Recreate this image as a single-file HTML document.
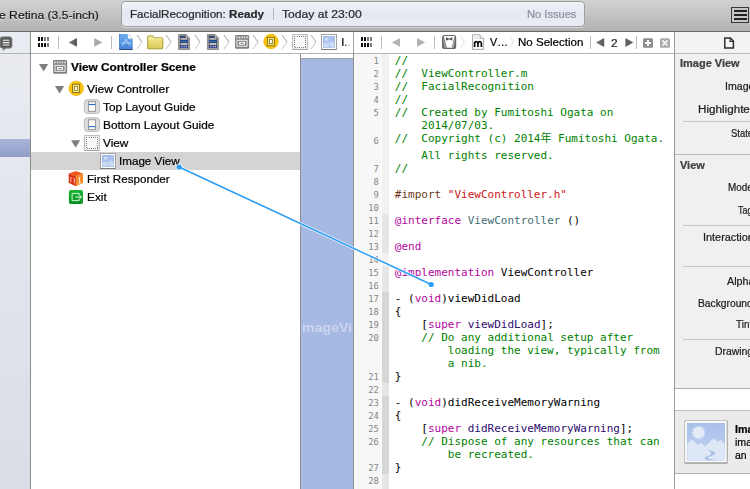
<!DOCTYPE html>
<html><head><meta charset="utf-8"><title>Xcode</title>
<style>
html,body{margin:0;padding:0}
body{width:750px;height:489px;overflow:hidden;position:relative;background:#fff;font-family:"Liberation Sans","Noto Sans CJK JP",sans-serif;font-size:11px;color:#000}
.a{position:absolute}
.t{position:absolute;white-space:pre;line-height:14px;transform-origin:0 50%;-webkit-text-stroke:0.22px currentColor}
#toolbar{left:0;top:0;width:750px;height:31px;background:linear-gradient(#d2d2d2,#c3c3c3 50%,#b1b1b1);border-bottom:1px solid #6a6a6a}
#status{left:121px;top:1px;width:462px;height:24px;border:1px solid #a0a0a0;border-radius:4px;background:linear-gradient(#eff2f8,#e4e8f1 50%,#eaedf5);box-shadow:0 1px 0 rgba(255,255,255,.45)}
#jump{left:0;top:32px;width:750px;height:21px;background:#fff;border-bottom:1px solid #b5b5b5}
.code{position:absolute;left:394.8px;white-space:pre;font-family:"DejaVu Sans Mono","Liberation Mono","Noto Sans CJK JP",monospace;font-size:11px;line-height:13px;color:#000;height:13px}
.ln{position:absolute;left:354px;width:24.5px;text-align:right;font-family:"DejaVu Sans Mono","Liberation Mono",monospace;font-size:8.8px;line-height:13px;color:#858585;height:13px;letter-spacing:-0.2px}
.c{color:#007f00}.k{color:#b4069d}.s{color:#cd1519}.p{color:#6c3a18}.cl{color:#3f6e74}.m{color:#2e0d6e}
.isep{position:absolute;left:683px;width:67px;height:1px;background:#c6c6c6}
</style></head><body>

<!-- ===== toolbar ===== -->
<div id="toolbar" class="a"></div>
<div id="status" class="a"></div>
<div class="a" style="left:273px;top:8px;width:1px;height:12px;background:#b4b7bf"></div>
<div class="a" style="left:731px;top:7px;width:16px;height:14px;border:1px solid #3a3a3a;background:#c6c6c6"></div>
<div class="a" style="left:734px;top:10px;width:12.5px;height:2px;background:#222"></div>
<div class="a" style="left:734px;top:14px;width:12.5px;height:2px;background:#222"></div>
<div class="a" style="left:734px;top:18px;width:12.5px;height:2px;background:#222"></div>

<!-- ===== jump bar ===== -->
<div id="jump" class="a"></div>
<div class="a" style="left:0;top:32px;width:30px;height:21px;background:#e9ecf2"></div>
<div class="t" style="left:341.3px;top:35.3px;width:11px;overflow:hidden;color:#000;-webkit-mask-image:linear-gradient(90deg,#000 30%,transparent 90%);mask-image:linear-gradient(90deg,#000 30%,transparent 90%)">I...</div>

<!-- ===== left sidebar ===== -->
<div class="a" style="left:0;top:54px;width:30px;height:435px;background:linear-gradient(#e9ebf1,#d9dde6)"></div>
<div class="a" style="left:0;top:139px;width:30px;height:18px;background:linear-gradient(#aab6d9,#8e9dc7)"></div>
<div class="a" style="left:30px;top:32px;width:1px;height:457px;background:#8e8e8e"></div>

<!-- ===== outline ===== -->
<div class="a" style="left:31px;top:152px;width:269px;height:18px;background:#d4d4d4"></div>

<!-- ===== canvas ===== -->
<div class="a" style="left:300px;top:54px;width:1px;height:435px;background:#8f8f8f"></div>
<div class="a" style="left:301px;top:58px;width:52px;height:1px;background:#a3a3a3"></div>
<div class="a" style="left:301px;top:59px;width:52px;height:430px;background:#a6b9e2;overflow:hidden">
  <div class="t" style="left:-16.8px;top:260.6px;font-size:13px;font-weight:bold;color:#cbd5f0;line-height:16px;transform:scaleX(1.088);-webkit-text-stroke:0">UIImageView</div>
</div>
<div class="a" style="left:353px;top:32px;width:1px;height:21px;background:#a4a4a4"></div>
<div class="a" style="left:353px;top:53px;width:1px;height:436px;background:#8f8f8f"></div>

<!-- ===== code gutter ===== -->
<div class="a" style="left:354px;top:54px;width:28px;height:435px;background:#f7f7f7"></div>
<div class="a" style="left:381px;top:54px;width:1px;height:435px;background:#fbfbfb"></div>
<div class="a" style="left:382px;top:54px;width:7px;height:435px;background:#f1f1f1"></div>
<div class="a" style="left:382px;top:214px;width:7px;height:39px;background:#e6e6e6"></div>
<div class="a" style="left:382px;top:266px;width:7px;height:223px;background:#e6e6e6"></div>
<div class="a" style="left:382px;top:292px;width:7px;height:91px;background:#d6d6d6"></div>
<div class="a" style="left:382px;top:396px;width:7px;height:78px;background:#d6d6d6"></div>
<div class="ln" style="top:55px">1</div>
<div class="code" style="top:54px"><span class="c">//</span></div>
<div class="ln" style="top:68px">2</div>
<div class="code" style="top:67px"><span class="c">//  ViewController.m</span></div>
<div class="ln" style="top:81px">3</div>
<div class="code" style="top:80px"><span class="c">//  FacialRecognition</span></div>
<div class="ln" style="top:94px">4</div>
<div class="code" style="top:93px"><span class="c">//</span></div>
<div class="ln" style="top:107px">5</div>
<div class="code" style="top:106px"><span class="c">//  Created by Fumitoshi Ogata on</span></div>
<div class="code" style="top:119px"><span class="c">    2014/07/03.</span></div>
<div class="ln" style="top:135px">6</div>
<div class="code" style="top:132px"><span class="c">//  Copyright (c) 2014年 Fumitoshi Ogata.</span></div>
<div class="code" style="top:149px"><span class="c">    All rights reserved.</span></div>
<div class="ln" style="top:163px">7</div>
<div class="code" style="top:162px"><span class="c">//</span></div>
<div class="ln" style="top:176px">8</div>
<div class="ln" style="top:189px">9</div>
<div class="code" style="top:188px"><span class="p">#import </span><span class="s">&quot;ViewController.h&quot;</span></div>
<div class="ln" style="top:202px">10</div>
<div class="ln" style="top:215px">11</div>
<div class="code" style="top:214px"><span class="k">@interface</span> <span class="cl">ViewController</span> ()</div>
<div class="ln" style="top:228px">12</div>
<div class="ln" style="top:241px">13</div>
<div class="code" style="top:240px"><span class="k">@end</span></div>
<div class="ln" style="top:254px">14</div>
<div class="ln" style="top:267px">15</div>
<div class="code" style="top:266px"><span class="k">@implementation</span> ViewController</div>
<div class="ln" style="top:280px">16</div>
<div class="ln" style="top:293px">17</div>
<div class="code" style="top:292px">- (<span class="k">void</span>)viewDidLoad</div>
<div class="ln" style="top:306px">18</div>
<div class="code" style="top:305px">{</div>
<div class="ln" style="top:319px">19</div>
<div class="code" style="top:318px">    [<span class="k">super</span> <span class="m">viewDidLoad</span>];</div>
<div class="ln" style="top:332px">20</div>
<div class="code" style="top:331px">    <span class="c">// Do any additional setup after</span></div>
<div class="code" style="top:344px"><span class="c">        loading the view, typically from</span></div>
<div class="code" style="top:357px"><span class="c">        a nib.</span></div>
<div class="ln" style="top:371px">21</div>
<div class="code" style="top:370px">}</div>
<div class="ln" style="top:384px">22</div>
<div class="ln" style="top:397px">23</div>
<div class="code" style="top:396px">- (<span class="k">void</span>)didReceiveMemoryWarning</div>
<div class="ln" style="top:410px">24</div>
<div class="code" style="top:409px">{</div>
<div class="ln" style="top:423px">25</div>
<div class="code" style="top:422px">    [<span class="k">super</span> <span class="m">didReceiveMemoryWarning</span>];</div>
<div class="ln" style="top:436px">26</div>
<div class="code" style="top:435px">    <span class="c">// Dispose of any resources that can</span></div>
<div class="code" style="top:448px"><span class="c">        be recreated.</span></div>
<div class="ln" style="top:462px">27</div>
<div class="code" style="top:461px">}</div>
<div class="ln" style="top:475px">28</div>
<div class="ln" style="top:488px">29</div>
<div class="code" style="top:487px"><span class="k">@end</span></div>

<!-- ===== inspector ===== -->
<div class="a" style="left:674px;top:32px;width:1px;height:457px;background:#9a9a9a"></div>
<div class="a" style="left:675px;top:32px;width:75px;height:21px;background:#f3f3f3"></div>
<div class="a" style="left:675px;top:53px;width:75px;height:1px;background:#bdbdbd"></div>
<div class="a" style="left:675px;top:54px;width:75px;height:334px;background:#f0f0f0"></div>
<div class="isep" style="top:121px"></div>
<div class="a" style="left:675px;top:154px;width:75px;height:1px;background:#b9b9b9"></div>
<div class="isep" style="top:225px"></div>
<div class="isep" style="top:266px"></div>
<div class="isep" style="top:339px"></div>
<div class="a" style="left:675px;top:388px;width:75px;height:1px;background:#ababab"></div>
<div class="a" style="left:675px;top:410px;width:75px;height:1px;background:#bdbdbd"></div>
<div class="a" style="left:675px;top:411px;width:75px;height:62px;background:#ebebeb"></div>
<div class="a" style="left:675px;top:473px;width:75px;height:1px;background:#b4b4b4"></div>

<!-- ===== text ===== -->
<div class="t" style="left:-1.2px;top:8.0px;font-size:11px;color:#1c1c1c;transform:scaleX(1.103);text-shadow:0 1px 0 rgba(255,255,255,.55)">e Retina (3.5-inch)</div>
<div class="t" style="left:130.0px;top:7.3px;font-size:11px;color:#2a2a2a;transform:scaleX(1.059)">FacialRecognition: <b>Ready</b></div>
<div class="t" style="left:282.3px;top:7.3px;font-size:11px;color:#2a2a2a;transform:scaleX(1.104)">Today at 23:00</div>
<div class="t" style="left:527.2px;top:7.1px;font-size:11px;color:#8d91a2;transform:scaleX(1.010)">No Issues</div>
<div class="t" style="left:489.9px;top:35.4px;font-size:11px;color:#000;transform:scaleX(0.976)">V…</div>
<div class="t" style="left:518.2px;top:35.4px;font-size:11px;color:#000;transform:scaleX(1.048)">No Selection</div>
<div class="t" style="left:611.2px;top:35.8px;font-size:11px;color:#2a2a2a;transform:scaleX(1.078)">2</div>
<div class="t" style="left:71.2px;top:60.2px;font-size:11px;color:#000;transform:scaleX(1.076);font-weight:bold">View Controller Scene</div>
<div class="t" style="left:86.6px;top:81.7px;font-size:11px;color:#000;transform:scaleX(1.106)">View Controller</div>
<div class="t" style="left:102.9px;top:99.7px;font-size:11px;color:#000;transform:scaleX(1.073)">Top Layout Guide</div>
<div class="t" style="left:102.6px;top:117.7px;font-size:11px;color:#000;transform:scaleX(1.078)">Bottom Layout Guide</div>
<div class="t" style="left:102.6px;top:135.7px;font-size:11px;color:#000;transform:scaleX(1.074)">View</div>
<div class="t" style="left:118.7px;top:153.9px;font-size:11px;color:#000;transform:scaleX(1.058)">Image View</div>
<div class="t" style="left:86.8px;top:171.7px;font-size:11px;color:#000;transform:scaleX(1.057)">First Responder</div>
<div class="t" style="left:86.8px;top:189.7px;font-size:11px;color:#000;transform:scaleX(1.074)">Exit</div>
<div class="t" style="left:680.2px;top:56.5px;font-size:10px;color:#404040;transform:scaleX(1.098);font-weight:bold">Image View</div>
<div class="t" style="left:725.3px;top:80.3px;font-size:10px;color:#1c1c1c;transform:scaleX(1.060)">Image</div>
<div class="t" style="left:698.2px;top:102.6px;font-size:10px;color:#1c1c1c;transform:scaleX(1.166)">Highlighted</div>
<div class="t" style="left:731.0px;top:126.6px;font-size:10px;color:#1c1c1c;transform:scaleX(0.946)">State</div>
<div class="t" style="left:680.2px;top:158.6px;font-size:10px;color:#404040;transform:scaleX(1.097);font-weight:bold">View</div>
<div class="t" style="left:728.2px;top:181.3px;font-size:10px;color:#1c1c1c;transform:scaleX(0.990)">Mode</div>
<div class="t" style="left:737.8px;top:204.3px;font-size:10px;color:#1c1c1c;transform:scaleX(0.890)">Tag</div>
<div class="t" style="left:702.7px;top:230.7px;font-size:10px;color:#1c1c1c;transform:scaleX(1.090)">Interaction</div>
<div class="t" style="left:727.0px;top:274.5px;font-size:10px;color:#1c1c1c;transform:scaleX(1.080)">Alpha</div>
<div class="t" style="left:697.5px;top:296.5px;font-size:10px;color:#1c1c1c;transform:scaleX(1.026)">Background</div>
<div class="t" style="left:736.2px;top:318.0px;font-size:10px;color:#1c1c1c;transform:scaleX(0.990)">Tint</div>
<div class="t" style="left:714.7px;top:344.7px;font-size:10px;color:#1c1c1c;transform:scaleX(1.040)">Drawing</div>
<div class="t" style="left:735.3px;top:422.2px;font-size:11px;color:#000;transform:scaleX(0.970);font-weight:bold">Image View</div>
<div class="t" style="left:735.4px;top:435.0px;font-size:11px;color:#000;transform:scaleX(0.970)">image view</div>
<div class="t" style="left:735.2px;top:447.8px;font-size:11px;color:#000;transform:scaleX(0.950)">an image</div>
<svg class="a" style="left:0;top:0" width="750" height="489" viewBox="0 0 750 489">
<defs>
  <linearGradient id="gproj" x1="0" y1="0" x2="0" y2="1"><stop offset="0" stop-color="#6fabf1"/><stop offset="1" stop-color="#4683db"/></linearGradient>
  <linearGradient id="gfold" x1="0" y1="0" x2="0" y2="1"><stop offset="0" stop-color="#f3ea93"/><stop offset="1" stop-color="#dccb58"/></linearGradient>
  <linearGradient id="gtri" x1="0" y1="0" x2="1" y2="0"><stop offset="0" stop-color="#808080"/><stop offset="1" stop-color="#555"/></linearGradient>
  <linearGradient id="ggreen" x1="0" y1="0" x2="0" y2="1"><stop offset="0" stop-color="#1bb636"/><stop offset="1" stop-color="#0b8f22"/></linearGradient>
  <linearGradient id="gsky" x1="0" y1="0" x2="0" y2="1"><stop offset="0" stop-color="#a9c0ea"/><stop offset="1" stop-color="#c5d5f1"/></linearGradient>
  <g id="scene">
    <rect x="0" y="0" width="14" height="13.8" rx="1.3" fill="#7f7f7f"/>
    <path d="M1.3 3.3 L2.6 1.4 M3.8 3.3 L5.1 1.4 M6.3 3.3 L7.6 1.4 M8.8 3.3 L10.1 1.4 M11.3 3.3 L12.6 1.4" stroke="#e2e2e2" stroke-width="1.3" fill="none"/>
    <rect x="1.9" y="5.3" width="10.1" height="6" fill="none" stroke="#f4f4f4" stroke-width="1"/>
    <rect x="3.9" y="6.8" width="6.1" height="3.1" fill="#f4f4f4"/>
    <rect x="5.4" y="7.85" width="3.2" height="1" fill="#7f7f7f"/>
  </g>
  <g id="vc">
    <circle r="7.2" fill="#fcc70f" stroke="#f3b300" stroke-width="0.8"/>
    <rect x="-3.6" y="-4.1" width="7" height="8.4" fill="#f8e98a" stroke="#8a7614" stroke-width="1"/>
    <rect x="-1.5" y="-2" width="2.8" height="4.2" fill="#fff" stroke="#8a7614" stroke-width="0.8"/>
  </g>
  <g id="view">
    <rect x="0.5" y="0.5" width="15" height="15" fill="#f8f8f8" stroke="#c2c2c2"/>
    <path d="M0.5 15.5 H15.5" stroke="#a6a6a6" stroke-width="1"/>
    <rect x="1.5" y="1.5" width="13" height="13" fill="none" stroke="#eeeeee" stroke-width="1"/>
    <path d="M2 2h1v1h-1zM5 2h1v1h-1zM7 2h1v1h-1zM9 2h1v1h-1zM11 2h1v1h-1zM13 2h1v1h-1zM3 13h1v1h-1zM5 13h1v1h-1zM7 13h1v1h-1zM9 13h1v1h-1zM11 13h1v1h-1zM13 13h1v1h-1zM2 4h1v1h-1zM2 6h1v1h-1zM2 8h1v1h-1zM2 10h1v1h-1zM2 12h1v1h-1zM13 4h1v1h-1zM13 6h1v1h-1zM13 8h1v1h-1zM13 10h1v1h-1zM13 12h1v1h-1z" fill="#7c7c7c"/>
  </g>
  <g id="imgv">
    <rect x="0.5" y="0.5" width="15" height="15" fill="#fdfdfd" stroke="#a2a2a2"/>
    <path d="M0.5 15.5 H15.5" stroke="#7c7c7c" stroke-width="1"/>
    <rect x="2" y="2" width="12" height="12" fill="#9bb7e6"/>
    <rect x="2.6" y="2.6" width="10.8" height="10.8" fill="#a9c3ee"/>
    <circle cx="5.7" cy="5.3" r="1.7" fill="#cfdcf5"/>
    <path d="M2.6 13.4 V9.6 l1.7-1.6 l1.6 1.7 l1.4-1.2 l1.2 1.2 l2.3-2.8 l1.5 1.9 l1.1-1 V13.4z" fill="#cddbf4"/>
    <path d="M8.4 10.6 q1.6 0.3 0.9 1.2 q-1 0.8 0.6 1.6 h-2 q-1.2-0.9 0-1.5 q0.9-0.5 0.5-1.3z" fill="#a9c3ee"/>
  </g>
  <g id="sbf">
    <path d="M0.4 0.4 H7.8 L11.4 4 V15.5 H0.4z" fill="#9b9b9b" stroke="#7e7e7e" stroke-width="0.8"/>
    <rect x="1.9" y="1.8" width="8" height="11.8" fill="#555"/>
    <rect x="1.9" y="1.8" width="8" height="1.9" fill="#2c4a78"/>
    <rect x="2.6" y="4" width="6.6" height="1.6" fill="#c4c4c4"/>
    <rect x="1.9" y="5.9" width="8" height="2.8" fill="#1f4d8c"/>
    <rect x="2.6" y="7" width="6.6" height="0.6" fill="#4a78b8"/>
    <rect x="2.6" y="9" width="6.6" height="1.9" fill="#c4c4c4"/>
    <rect x="1.9" y="11.6" width="8" height="2" fill="#1b2f9c"/>
    <path d="M3.2 12.6 h1.2 M5.5 12.6 h1.2 M7.8 12.6 h1.2" stroke="#f2f2f2" stroke-width="1"/>
    <path d="M7.8 0.4 V4 H11.4z" fill="#cdcdcd" stroke="#777" stroke-width="0.6"/>
  </g>
  <g id="chev">
    <path d="M-5 -7 L0 0" stroke="#8a8a8a" stroke-width="0.8" fill="none"/>
    <path d="M0 0 L-5 7" stroke="#b4b4b4" stroke-width="0.8" fill="none"/>
  </g>
  <g id="chevl">
    <path d="M-3.7 -5.5 L0 0 L-3.7 5.5" stroke="#dadada" stroke-width="0.9" fill="none"/>
  </g>
  <g id="grid">
    <rect x="0" y="0" width="2" height="4" fill="#111"/><rect x="3" y="0" width="2" height="4" fill="#111"/><rect x="6" y="0" width="2" height="4" fill="#7c7c7c"/><rect x="9" y="0" width="2" height="4" fill="#7c7c7c"/>
    <rect x="0" y="6" width="2" height="4" fill="#111"/><rect x="3" y="6" width="2" height="4" fill="#111"/><rect x="6" y="6" width="2" height="4" fill="#111"/><rect x="9" y="6" width="2" height="4" fill="#7c7c7c"/>
  </g>
  <g id="guide">
    <rect x="0.4" y="0.4" width="15.2" height="13.7" rx="3.2" fill="#dedede" stroke="#b4b4b4" stroke-width="0.9"/>
    <rect x="4.4" y="2.4" width="7.2" height="9.6" fill="#fbfbfb" stroke="#8d8d8d" stroke-width="0.9"/>
  </g>
</defs>

<!-- sidebar speech bubble -->
<path d="M2.5 36.8 H9.5 Q12 36.8 12 39.3 V45.7 Q12 48.2 9.5 48.2 H5.6 L3.2 50.6 V48.2 H2.5 Q0 48.2 0 45.7 V39.3 Q0 36.8 2.5 36.8z" fill="#5a5a5a" stroke="#8b8b8b" stroke-width="0.8"/>
<path d="M2.8 40.2 H9.4 M2.8 42.6 H9.4 M2.8 45 H9.4" stroke="#f1f1f1" stroke-width="1.1"/>

<!-- left jump bar -->
<use href="#grid" x="38" y="37"/>
<rect x="58" y="36" width="1" height="13" fill="#bcbcbc"/>
<path d="M77 38 V46.8 L68.6 42.4z" fill="url(#gtri)"/>
<path d="M94.2 38 V46.8 L102.4 42.4z" fill="#a9a9a9"/>
<rect x="111" y="36" width="1" height="13" fill="#bcbcbc"/>
<g transform="translate(119.5 34)">
  <path d="M0 0 H8.4 L13.2 4.8 V15.8 H0z" fill="url(#gproj)"/>
  <path d="M0 0 V15.8" stroke="#3f78cc" stroke-width="0.8"/>
  <path d="M8.4 0 V4.8 H13.2z" fill="#f4f7fc"/>
  <path d="M8.4 4.8 H13.2 L8.4 0" fill="none" stroke="#b9c6da" stroke-width="0.5"/>
  <path d="M2.8 11.7 L6.8 5 M10.8 11.7 L5.8 5 M1.5 9 H11.8" stroke="#c3dcfa" stroke-width="0.9" fill="none" stroke-opacity="0.9"/>
  <rect x="0" y="15.1" width="13.2" height="0.9" fill="#2a416a"/>
</g>
<use href="#chev" x="142" y="42"/>
<g transform="translate(147.2 35.4)">
  <path d="M0.5 13 V1.3 Q0.5 0.5 1.3 0.5 H5.4 Q6 0.5 6.3 1.1 L6.9 2.4 H14.9 Q15.6 2.4 15.6 3.1 V13 Q15.6 13.4 15.1 13.4 H1 Q0.5 13.4 0.5 13z" fill="url(#gfold)" stroke="#a99a3a" stroke-width="1"/>
  <path d="M1.2 3.4 H15" stroke="#f8f2b4" stroke-width="0.8"/>
</g>
<use href="#chev" x="171" y="42"/>
<use href="#sbf" x="178.1" y="34.1"/>
<use href="#chev" x="200" y="42"/>
<use href="#sbf" x="207" y="34.1"/>
<use href="#chev" x="229" y="42"/>
<use href="#scene" x="235.1" y="35"/>
<use href="#chev" x="258" y="42"/>
<use href="#vc" x="271" y="41.5"/>
<use href="#chev" x="287" y="42"/>
<use href="#view" x="292" y="34"/>
<use href="#chev" x="316" y="42"/>
<use href="#imgv" x="321" y="34"/>

<!-- right jump bar -->
<use href="#grid" x="361" y="37"/>
<rect x="381" y="36" width="1" height="13" fill="#bcbcbc"/>
<path d="M400 38 V46.8 L392 42.4z" fill="#b3b3b3"/>
<path d="M417 38 V46.8 L425.1 42.4z" fill="#b3b3b3"/>
<rect x="434" y="36" width="1" height="13" fill="#bcbcbc"/>
<g transform="translate(442 35)">
  <rect x="0" y="0" width="14.2" height="14" rx="2.6" fill="#666"/>
  <path d="M1.7 0.9 H12.6 L9.9 12.7 H4.9z" fill="#fff"/>
  <path d="M1.2 2 L4.6 12.9 H3 Q1 9.5 1.2 2z M13 2 L9.9 12.9 H11.4 Q13.2 9.5 13 2z" fill="#a2a2a2"/>
  <path d="M4 2.3 L6.6 3.6 H7.8 L10.3 2.3 V5.8 L7.8 4.5 H6.6 L4 5.8z" fill="#4a4a4a"/>
</g>
<use href="#chevl" x="464.5" y="42"/>
<g transform="translate(472 34.2)">
  <path d="M0.5 0.6 H8 L11.6 4.2 V15.2 H0.5z" fill="#fcfcfc" stroke="#a0a0a0" stroke-width="0.9"/>
  <path d="M8 0.6 V4.2 H11.6" fill="#ececec" stroke="#a6a6a6" stroke-width="0.8"/>
  <path d="M2 2.8 H6.6 M2 4.4 H6.6" stroke="#e0e0e0" stroke-width="0.8"/>
  <path d="M2.6 12.8 V7.6 M2.6 8.9 Q3.5 7.2 4.9 7.6 Q6 8 6 9.3 V12.8 M6 9 Q6.9 7.2 8.3 7.6 Q9.4 8 9.4 9.3 V12.8" stroke="#0a0a0a" stroke-width="1.7" fill="none"/>
</g>
<use href="#chevl" x="513.5" y="42"/>
<rect x="590" y="36" width="1" height="13" fill="#bcbcbc"/>
<path d="M604.2 37.9 V46.9 L595.8 42.4z" fill="url(#gtri)"/>
<path d="M625.4 37.9 V46.9 L633.3 42.4z" fill="#5f5f5f"/>
<rect x="636" y="36" width="1" height="13" fill="#bcbcbc"/>
<rect x="643" y="38.2" width="10" height="9.6" rx="1.6" fill="#8b8b8b"/>
<path d="M648 40 V46 M645 43 H651" stroke="#fff" stroke-width="1.8"/>
<rect x="660" y="38.2" width="10" height="9.6" rx="1.6" fill="#a9a9a9"/>
<path d="M662.4 40.4 L667.6 45.6 M667.6 40.4 L662.4 45.6" stroke="#f4f4f4" stroke-width="1.7"/>

<!-- inspector file icon -->
<path d="M724.8 38 H730.4 L733.4 41 V48 H724.8z" fill="#f8f8f8" stroke="#2f2f2f" stroke-width="1.5"/>
<path d="M730 38.4 V41.4 H733" fill="none" stroke="#2f2f2f" stroke-width="1.1"/>

<!-- outline icons -->
<path d="M39 64 H48.2 L43.6 71.6z" fill="#7f7f7f"/>
<use href="#scene" x="53.1" y="60"/>
<path d="M55 86.1 H64.2 L59.6 93.5z" fill="#7f7f7f"/>
<use href="#vc" x="76.2" y="88.35"/>
<use href="#guide" x="84" y="99.3"/>
<path d="M88.6 104.5 H95.4" stroke="#1f6fc4" stroke-width="1.1"/>
<use href="#guide" x="84" y="117.4"/>
<path d="M88.6 126.6 H95.4" stroke="#1f6fc4" stroke-width="1.1"/>
<path d="M71 140.2 H80.2 L75.6 147.5z" fill="#7f7f7f"/>
<use href="#view" x="84" y="135"/>
<use href="#imgv" x="100" y="153"/>
<!-- first responder cube -->
<g transform="translate(68.7 170.9)">
  <path d="M7.2 0 L14.3 2.6 L7.2 5.6 L0 2.6z" fill="#ee5a1c"/>
  <path d="M0 2.6 L7.2 5.6 V15.3 L0 11.8z" fill="#dc2f12"/>
  <path d="M14.3 2.6 L7.2 5.6 V15.3 L14.3 11.8z" fill="#f58a23"/>
  <path d="M9.6 7.6 L10.9 6.6 V12 M9.8 12.6 L12 11.5" stroke="#fff3e0" stroke-width="1" fill="none"/>
  <path d="M2.2 6 V11.2 M4.6 7.2 L5.6 7.8 V12.4" stroke="#ffd9c8" stroke-width="0.9" fill="none"/>
</g>
<!-- exit icon -->
<g transform="translate(68.9 190)">
  <rect x="0" y="0" width="14.1" height="13.9" rx="2" fill="url(#ggreen)"/>
  <path d="M10.3 5.4 V3.4 H3.2 V10.6 H10.3 V8.6" fill="none" stroke="#c9f5cf" stroke-width="1"/>
  <path d="M6.6 7 H12.4 M10.6 5.2 L12.6 7 L10.6 8.8" fill="none" stroke="#e9ffec" stroke-width="1"/>
</g>

<!-- library image icon -->
<g>
  <rect x="685.3" y="421.6" width="42.4" height="42" fill="#7a7a7a" opacity="0.25"/>
  <rect x="684.7" y="420.7" width="42.5" height="42.2" fill="#fbfbfc" stroke="#b0b0b0" stroke-width="0.8"/>
  <path d="M684.7 463 H727.3" fill="none" stroke="#8e8e8e" stroke-width="0.9"/><path d="M727.3 463 V421" fill="none" stroke="#ababab" stroke-width="0.9"/>
  <rect x="687.3" y="423.2" width="37.5" height="37.1" fill="url(#gsky)"/>
  <rect x="687.6" y="423.5" width="36.9" height="36.5" fill="none" stroke="#9db5e2" stroke-width="0.6"/>
  <polygon points="706.0,432.6 703.8,433.6 705.4,435.4 703.0,435.5 703.8,437.8 701.5,437.0 701.4,439.4 699.6,437.8 698.6,440.0 697.6,437.8 695.8,439.4 695.7,437.0 693.4,437.8 694.2,435.5 691.8,435.4 693.4,433.6 691.2,432.6 693.4,431.6 691.8,429.8 694.2,429.7 693.4,427.4 695.7,428.2 695.8,425.8 697.6,427.4 698.6,425.2 699.6,427.4 701.4,425.8 701.5,428.2 703.8,427.4 703.0,429.7 705.4,429.8 703.8,431.6" fill="#e3ebf9"/>
  <path d="M687.3 460.3 V443.8 L691.8 439.3 L698 445 L701 443 L705.3 446.6 L713.4 438.2 L717.7 442.1 L720.7 440.1 L724.8 444 V460.3z" fill="#dde7f6"/>
  <path d="M706.4 450 Q716.5 451 715.2 453.6 Q714 455.6 708.6 457 Q705.8 458 709.6 459 L716 460.3 H707.4 Q702.6 458.6 706.2 456.6 Q711.6 454.6 711.4 453.2 Q711 451.6 706.4 450z" fill="#a9bfe8"/>
</g>

<!-- connection line -->
<path d="M179.1 167 L431.2 284.5" stroke="#fff" stroke-opacity="0.75" stroke-width="3.2" fill="none"/>
<circle cx="179.1" cy="167" r="3.5" fill="#fff" fill-opacity="0.8"/>
<circle cx="431.2" cy="284.5" r="3.5" fill="#fff" fill-opacity="0.8"/>
<path d="M179.1 167 L431.2 284.5" stroke="#2a9df6" stroke-width="1.5" fill="none"/>
<circle cx="179.1" cy="167" r="2.6" fill="#2a9df6"/>
<circle cx="431.2" cy="284.5" r="2.6" fill="#2a9df6"/>
</svg>

</body></html>
